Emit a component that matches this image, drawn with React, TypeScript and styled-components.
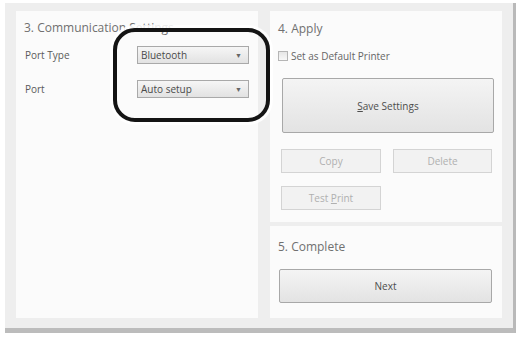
import styled, { createGlobalStyle } from "styled-components";

const Global = createGlobalStyle`
  html, body {
    margin: 0;
    padding: 0;
    background: #ffffff;
  }
  body {
    font-family: "Open Sans", "Noto Sans", sans-serif;
    color: #5c5c5c;
  }
`;

const Screen = styled.div`
  width: 523px;
  height: 341px;
  position: relative;
  overflow: hidden;
  background: #ffffff;
`;

const Frame = styled.div`
  position: relative;
  margin: 3px 0 0 5px;
  width: 511px;
  height: 330px;
  box-sizing: border-box;
  padding: 8px 11px 10px 11px;
  background: #eeeeee;
  border-right: 3px solid #b9b9b9;
  border-bottom: 5px solid #bcbcbc;
  display: grid;
  grid-template-columns: 242px 232px;
  grid-template-rows: 211px 1fr;
  column-gap: 12px;
  row-gap: 4px;
`;

const Panel = styled.section<{ $rows?: string; $pt?: number }>`
  background: #fbfbfb;
  grid-row: ${(p) => p.$rows || "auto"};
  padding: ${(p) => p.$pt ?? 9}px 8px 0 8px;
  box-sizing: border-box;
`;

const Heading = styled.h2`
  margin: 0;
  font-size: 12px;
  font-weight: 400;
  color: #707070;
  line-height: 16px;
`;

const FieldRow = styled.div<{ $top: number }>`
  display: grid;
  grid-template-columns: 113px 112px;
  align-items: center;
  height: 18px;
  margin-top: ${(p) => p.$top}px;
`;

const Label = styled.span`
  font-size: 10px;
  color: #5a5a5a;
  padding-left: 1px;
`;

const Select = styled.div`
  height: 18px;
  box-sizing: border-box;
  border: 1px solid #a9a9a9;
  background: linear-gradient(#f6f6f6, #e2e2e2);
  display: flex;
  align-items: center;
  justify-content: space-between;
  padding: 0 6px 0 3px;
  font-size: 10px;
  color: #4a4a4a;
`;

const Arrow = styled.span`
  font-size: 7px;
  color: #666;
`;

const CheckRow = styled.label`
  display: flex;
  align-items: center;
  gap: 3px;
  margin-top: 12px;
  font-size: 10px;
  color: #666;
`;

const Box = styled.span`
  width: 10px;
  height: 10px;
  box-sizing: border-box;
  border: 1px solid #b5b5b5;
  background: linear-gradient(#e6e6e6, #f8f8f8);
`;

const BigButton = styled.div<{ $h: number; $top: number; $ml: number; $mr: number }>`
  height: ${(p) => p.$h}px;
  margin: ${(p) => p.$top}px ${(p) => p.$mr}px 0 ${(p) => p.$ml}px;
  box-sizing: border-box;
  border: 1px solid #a8a8a8;
  border-radius: 2px;
  background: linear-gradient(#f4f4f4, #e3e3e3);
  display: flex;
  align-items: center;
  justify-content: center;
  font-size: 10px;
  color: #4d4d4d;
`;

const ButtonGrid = styled.div`
  display: grid;
  grid-template-columns: 100px 99px;
  column-gap: 12px;
  row-gap: 13px;
  margin: 16px 0 0 3px;
`;

const SmallButton = styled.div`
  height: 24px;
  box-sizing: border-box;
  border: 1px solid #d4d4d4;
  background: #f2f2f2;
  display: flex;
  align-items: center;
  justify-content: center;
  font-size: 10px;
  color: #b0b0b0;
`;

const Key = styled.span`
  text-decoration: underline;
`;

const Callout = styled.div`
  position: absolute;
  left: 108px;
  top: 25px;
  width: 157px;
  height: 94px;
  box-sizing: border-box;
  border: 4px solid #141414;
  border-radius: 22px;
  box-shadow: 0 0 0 3px rgba(255, 255, 255, 0.85);
  pointer-events: none;
`;

export default function App() {
  return (
    <Screen>
      <Global />
      <Frame>
        <Panel $rows="1 / span 2">
          <Heading>3. Communication Settings</Heading>
          <FieldRow $top={10}>
            <Label>Port Type</Label>
            <Select>
              Bluetooth
              <Arrow>▼</Arrow>
            </Select>
          </FieldRow>
          <FieldRow $top={16}>
            <Label>Port</Label>
            <Select>
              Auto setup
              <Arrow>▼</Arrow>
            </Select>
          </FieldRow>
        </Panel>

        <Panel $pt={10}>
          <Heading>4. Apply</Heading>
          <CheckRow>
            <Box />
            Set as Default Printer
          </CheckRow>
          <BigButton $h={55} $top={15} $ml={4} $mr={0}>
            <span>
              <Key>S</Key>ave Settings
            </span>
          </BigButton>
          <ButtonGrid>
            <SmallButton>Copy</SmallButton>
            <SmallButton>Delete</SmallButton>
            <SmallButton>
              <span>
                Test <Key>P</Key>rint
              </span>
            </SmallButton>
          </ButtonGrid>
        </Panel>

        <Panel $pt={13}>
          <Heading>5. Complete</Heading>
          <BigButton $h={34} $top={14} $ml={1} $mr={2}>
            Next
          </BigButton>
        </Panel>

        <Callout />
      </Frame>
    </Screen>
  );
}
